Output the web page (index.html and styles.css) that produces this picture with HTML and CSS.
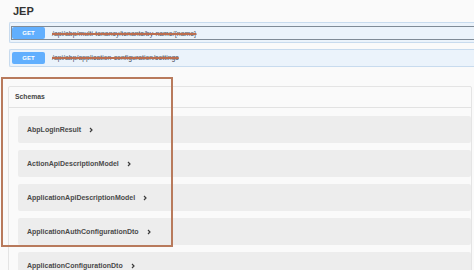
FILE: index.html
```html
<!DOCTYPE html>
<html lang="en">
<head>
    <meta charset="UTF-8">
    <meta name="viewport" content="width=device-width, initial-scale=1.0">
    <title>JEP API</title>
    <link rel="stylesheet" href="styles.css">
</head>
<body>
    <h1 class="tag-title">JEP</h1>

    <div class="op op-focused">
        <div class="op-summary">
            <span class="method">GET</span>
            <span class="path">/api/abp/multi-tenancy/tenants/by-name/{name}</span>
        </div>
    </div>
    <div class="op">
        <div class="op-summary">
            <span class="method">GET</span>
            <span class="path">/api/abp/application-configuration/settings</span>
        </div>
    </div>

    <section class="schemas">
        <div class="schemas-header">Schemas</div>
        <div class="schemas-body">
            <div class="model">AbpLoginResult <svg class="chevron" viewBox="0 0 4 6"><path d="M1 1l2 2-2 2"/></svg></div>
            <div class="model">ActionApiDescriptionModel <svg class="chevron" viewBox="0 0 4 6"><path d="M1 1l2 2-2 2"/></svg></div>
            <div class="model">ApplicationApiDescriptionModel <svg class="chevron" viewBox="0 0 4 6"><path d="M1 1l2 2-2 2"/></svg></div>
            <div class="model">ApplicationAuthConfigurationDto <svg class="chevron" viewBox="0 0 4 6"><path d="M1 1l2 2-2 2"/></svg></div>
            <div class="model">ApplicationConfigurationDto <svg class="chevron" viewBox="0 0 4 6"><path d="M1 1l2 2-2 2"/></svg></div>
        </div>
    </section>

    <div class="highlight"></div>
</body>
</html>
```

FILE: styles.css
```css
body {
    margin: 0;
    background-color: #fafafa;
    font-family: "Liberation Sans", Arial, sans-serif;
    color: #3b4151;
    overflow: hidden;
    height: 270px;
    position: relative;
}
.tag-title {
    margin: 0 0 4px;
    padding: 5px 13px 0;
    font-size: 11px;
    line-height: 13px;
    font-weight: bold;
    color: #333;
}
.op {
    margin: 0 0 6px 9px;
    padding: 1px 0 2px 2px;
    background: #ebf3fb;
    border: 1px solid #c8dbee;
    border-right: none;
    border-radius: 2px 0 0 2px;
}
.op-focused {
    padding: 3px 0 2px 1px;
}
.op-summary {
    display: flex;
    align-items: center;
    gap: 7px;
    height: 13px;
}
.op-focused .op-summary {
    height: 12px;
    border: 1px solid #7f8b97;
    border-right: none;
}
.method {
    width: 33px;
    height: 12px;
    line-height: 12px;
    background: #61affe;
    border-radius: 2px;
    color: #fff;
    font-size: 6px;
    font-weight: bold;
    text-align: center;
}
.path {
    font-size: 6.9px;
    color: #4a4f5c;
    text-decoration: line-through;
    text-decoration-color: #bb6e50;
    text-decoration-thickness: 2px;
}
.schemas {
    margin: 19px 2px 0 8px;
    border: 1px solid #e4e4e4;
    border-radius: 2px;
}
.schemas-header {
    height: 20px;
    line-height: 20px;
    padding-left: 6px;
    font-size: 6.8px;
    font-weight: bold;
    color: #444;
    border-bottom: 1px solid #e2e2e2;
}
.schemas-body {
    display: flex;
    flex-direction: column;
    gap: 7px;
    padding: 8px 0 0 9px;
}
.model {
    display: flex;
    align-items: center;
    gap: 8px;
    height: 27px;
    padding-left: 9px;
    background: #ededed;
    border-radius: 2px;
    font-size: 7px;
    font-weight: bold;
    color: #4a4a4a;
}
.chevron {
    width: 4px;
    height: 6px;
    fill: none;
    stroke: #3b3b3b;
    stroke-width: 1.2;
}
.highlight {
    position: absolute;
    left: 1px;
    top: 77px;
    width: 168px;
    height: 166px;
    border: 2px solid #b87a5c;
}
```
